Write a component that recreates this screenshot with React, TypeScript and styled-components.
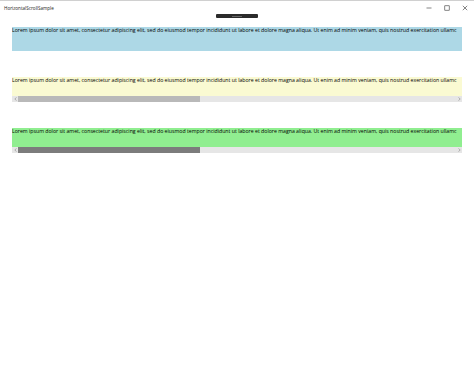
import styled, { createGlobalStyle } from 'styled-components'

const Global = createGlobalStyle`
  html, body { margin: 0; padding: 0; background: #fff; }
  body { font-family: "Segoe UI", "Open Sans", "Liberation Sans", sans-serif; }
`

const LOREM = 'Lorem ipsum dolor sit amet, consectetur adipiscing elit, sed do eiusmod tempor incididunt ut labore et dolore magna aliqua. Ut enim ad minim veniam, quis nostrud exercitation ullamc'

const Window = styled.div`
  width: 474px;
  height: 369px;
  background: #fff;
  border-top: 1px solid #d0d0d0;
  box-sizing: border-box;
  display: flex;
  flex-direction: column;
`

const TitleBar = styled.div`
  height: 13px;
  display: flex;
  align-items: center;
  justify-content: space-between;
  padding-left: 4px;
  font-size: 4.6px;
  color: #222;
`

const Controls = styled.div`
  display: flex;
  height: 100%;
`

const Ctrl = styled.div`
  width: 18px;
  display: flex;
  align-items: center;
  justify-content: center;
`

const DebugBar = styled.div`
  align-self: center;
  width: 42px;
  height: 4px;
  background: #2b2b2b;
  border-radius: 1px;
  display: flex;
  align-items: center;
  justify-content: center;
  &::after {
    content: '';
    width: 10px;
    height: 1px;
    background: #666;
  }
`

const Content = styled.div`
  padding: 9px 12px 0 12px;
  display: flex;
  flex-direction: column;
  gap: 26px;
`

const Block = styled.div<{ $bg: string; $h?: number }>`
  width: 450px;
  height: ${p => p.$h ?? 24}px;
  background: ${p => p.$bg};
  display: flex;
  flex-direction: column;
  justify-content: space-between;
  overflow: hidden;
`

const Line = styled.div`
  white-space: nowrap;
  font-size: 5.2px;
  line-height: 7px;
  color: #000;
`

const ScrollBar = styled.div`
  height: 6px;
  background: #e6e6e6;
  display: flex;
  align-items: center;
`

const Arrow = styled.div`
  width: 6px;
  height: 6px;
  display: flex;
  align-items: center;
  justify-content: center;
`

const Track = styled.div`
  flex: 1;
  height: 6px;
  display: flex;
`

const Thumb = styled.div<{ $dark?: boolean }>`
  width: 182px;
  height: 6px;
  background: ${p => (p.$dark ? '#7c7c7c' : '#b9b9b9')};
`

const Scroll = ({ dark }: { dark?: boolean }) => (
  <ScrollBar>
    <Arrow>
      <svg width="3" height="4" viewBox="0 0 3 4"><path d="M2.5 0.5 L0.8 2 L2.5 3.5" fill="none" stroke="#888" strokeWidth="0.6" /></svg>
    </Arrow>
    <Track>
      <Thumb $dark={dark} />
    </Track>
    <Arrow>
      <svg width="3" height="4" viewBox="0 0 3 4"><path d="M0.5 0.5 L2.2 2 L0.5 3.5" fill="none" stroke="#888" strokeWidth="0.6" /></svg>
    </Arrow>
  </ScrollBar>
)

export default function App() {
  return (
    <>
      <Global />
      <Window>
        <TitleBar>
          <span>HorizontalScrollSample</span>
          <Controls>
            <Ctrl>
              <svg width="6" height="6" viewBox="0 0 6 6"><path d="M0.5 3 H5.5" stroke="#333" strokeWidth="0.6" /></svg>
            </Ctrl>
            <Ctrl>
              <svg width="6" height="6" viewBox="0 0 6 6"><rect x="0.8" y="0.8" width="4.4" height="4.4" fill="none" stroke="#333" strokeWidth="0.6" /></svg>
            </Ctrl>
            <Ctrl>
              <svg width="6" height="6" viewBox="0 0 6 6"><path d="M0.8 0.8 L5.2 5.2 M5.2 0.8 L0.8 5.2" stroke="#333" strokeWidth="0.6" /></svg>
            </Ctrl>
          </Controls>
        </TitleBar>
        <DebugBar />
        <Content>
          <Block $bg="#add8e6">
            <Line>{LOREM}</Line>
          </Block>
          <Block $bg="#fafad2" $h={25}>
            <Line>{LOREM}</Line>
            <Scroll />
          </Block>
          <Block $bg="#90ee90" $h={25}>
            <Line>{LOREM}</Line>
            <Scroll dark />
          </Block>
        </Content>
      </Window>
    </>
  )
}
